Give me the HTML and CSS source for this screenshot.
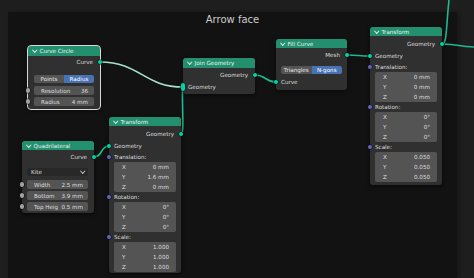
FILE: index.html
```html
<!DOCTYPE html>
<html lang="en">
<head>
  <meta charset="UTF-8" />
  <title>Arrow face - Geometry Nodes</title>
  <link rel="stylesheet" href="styles.css">
</head>
<body>

  <div class="frame">
    <div class="frame-title">Arrow face</div>

    <!-- links between sockets -->
    <svg class="wires" width="449" height="266" viewBox="0 0 449 266">
      <path class="wire hot" d="M92,50 C132,50 136,75 175,75" />
      <path class="wire" d="M247,63 C258,63 257,70 268,70" />
      <path class="wire" d="M339,43 C350,43 351,44 362,44" />
      <path class="wire" d="M434,32 C452,32 450,35 466,35" />
      <path class="wire" d="M434,32 C439,32 438,16 441,-12" />
      <path class="wire" d="M86,145 C95,145 92,134 101,134" />
      <path class="wire" d="M173,122 C177,122 173,84 175,75" />
    </svg>

    <!-- Curve Circle -->
    <div class="node node-circle selected">
      <div class="node-head"><span class="chev"></span>Curve Circle</div>
      <div class="row out mt1">Curve<span class="sock geo"></span></div>
      <div class="toggle mt8 mx6">
        <span>Points</span>
        <span class="on">Radius</span>
      </div>
      <div class="field mt3 mx6"><span class="sock flt"></span><span>Resolution</span><span>36</span></div>
      <div class="field mt2 mx6"><span class="sock flt"></span><span>Radius</span><span>4 mm</span></div>
    </div>

    <!-- Join Geometry -->
    <div class="node node-join">
      <div class="node-head"><span class="chev"></span>Join Geometry</div>
      <div class="row out mt2">Geometry<span class="sock geo"></span></div>
      <div class="row in mt2"><span class="sock geo multi"></span>Geometry</div>
    </div>

    <!-- Fill Curve -->
    <div class="node node-fill">
      <div class="node-head"><span class="chev"></span>Fill Curve</div>
      <div class="row out mt2">Mesh<span class="sock geo"></span></div>
      <div class="toggle mt6 mx5">
        <span>Triangles</span>
        <span class="on">N-gons</span>
      </div>
      <div class="row in mt3"><span class="sock geo"></span>Curve</div>
    </div>

    <!-- Transform (right) -->
    <div class="node node-tr-right">
      <div class="node-head"><span class="chev"></span>Transform</div>
      <div class="row out mt3">Geometry<span class="sock geo"></span></div>
      <div class="row in mt2"><span class="sock geo"></span>Geometry</div>
      <div class="vgroup mt1">
        <div class="row in"><span class="sock vec"></span>Translation:</div>
        <div class="vfields">
          <div class="vf"><span>X</span><span>0 mm</span></div>
          <div class="vf"><span>Y</span><span>0 mm</span></div>
          <div class="vf"><span>Z</span><span>0 mm</span></div>
        </div>
      </div>
      <div class="vgroup">
        <div class="row in"><span class="sock vec"></span>Rotation:</div>
        <div class="vfields">
          <div class="vf"><span>X</span><span>0°</span></div>
          <div class="vf"><span>Y</span><span>0°</span></div>
          <div class="vf"><span>Z</span><span>0°</span></div>
        </div>
      </div>
      <div class="vgroup">
        <div class="row in"><span class="sock vec"></span>Scale:</div>
        <div class="vfields">
          <div class="vf"><span>X</span><span>0.050</span></div>
          <div class="vf"><span>Y</span><span>0.050</span></div>
          <div class="vf"><span>Z</span><span>0.050</span></div>
        </div>
      </div>
    </div>

    <!-- Transform (middle) -->
    <div class="node node-tr-mid">
      <div class="node-head"><span class="chev"></span>Transform</div>
      <div class="row out mt3">Geometry<span class="sock geo"></span></div>
      <div class="row in mt2"><span class="sock geo"></span>Geometry</div>
      <div class="vgroup mt1">
        <div class="row in"><span class="sock vec"></span>Translation:</div>
        <div class="vfields">
          <div class="vf"><span>X</span><span>0 mm</span></div>
          <div class="vf"><span>Y</span><span>1.6 mm</span></div>
          <div class="vf"><span>Z</span><span>0 mm</span></div>
        </div>
      </div>
      <div class="vgroup">
        <div class="row in"><span class="sock vec"></span>Rotation:</div>
        <div class="vfields">
          <div class="vf"><span>X</span><span>0°</span></div>
          <div class="vf"><span>Y</span><span>0°</span></div>
          <div class="vf"><span>Z</span><span>0°</span></div>
        </div>
      </div>
      <div class="vgroup">
        <div class="row in"><span class="sock vec"></span>Scale:</div>
        <div class="vfields">
          <div class="vf"><span>X</span><span>1.000</span></div>
          <div class="vf"><span>Y</span><span>1.000</span></div>
          <div class="vf"><span>Z</span><span>1.000</span></div>
        </div>
      </div>
    </div>

    <!-- Quadrilateral -->
    <div class="node node-quad">
      <div class="node-head"><span class="chev"></span>Quadrilateral</div>
      <div class="row out mt2">Curve<span class="sock geo"></span></div>
      <div class="dropdown mt6 mx5l6"><span>Kite</span><span class="chev dark"></span></div>
      <div class="field mt4 mx5l6"><span class="sock flt"></span><span>Width</span><span>2.5 mm</span></div>
      <div class="field mt2 mx5l6"><span class="sock flt"></span><span>Bottom</span><span>3.9 mm</span></div>
      <div class="field mt2 mx5l6"><span class="sock flt"></span><span>Top Heig</span><span>0.5 mm</span></div>
    </div>
  </div>

</body>
</html>
```

FILE: styles.css
```css
body {
  margin: 0;
  width: 474px;
  height: 278px;
  overflow: hidden;
  background: #1e1e1e;
  font-family: 'DejaVu Sans', 'Noto Sans', sans-serif;
  font-size: 5.6px;
  color: #dedede;
}

/* frame around the whole setup */
.frame {
  position: relative;
  margin: 12px 0 0 8px;
  width: 449px;
  height: 266px;
  background: #121212;
  box-shadow: 2px 0 3px rgba(0,0,0,0.25);
}
.frame-title {
  text-align: center;
  font-size: 10px;
  color: #cccccc;
  padding-top: 2px;
}

.wires {
  position: absolute;
  left: 0;
  top: 0;
  overflow: visible;
}
.wire {
  fill: none;
  stroke: #1fb98e;
  stroke-width: 1.6;
}
.wire.hot {
  stroke: #a8e2cc;
}

/* nodes */
.node {
  position: absolute;
  width: 72px;
  background: #303030;
  border-radius: 3px;
  display: flex;
  flex-direction: column;
  box-shadow: 0 1px 4px rgba(0,0,0,0.6);
}
.node.selected {
  outline: 1px solid #d8d8d8;
}
.node-circle   { left: 20px;  top: 34px;  height: 63px; }
.node-join     { left: 175px; top: 46px;  height: 36px; }
.node-fill     { left: 268px; top: 27px;  width: 71px; height: 51px; }
.node-tr-right { left: 362px; top: 15px;  height: 158px; }
.node-tr-mid   { left: 101px; top: 105px; height: 156px; }
.node-quad     { left: 14px;  top: 129px; height: 72px; }

.node-head {
  height: 9px;
  background: #22906f;
  border-radius: 3px 3px 0 0;
  display: flex;
  align-items: center;
  padding-left: 4px;
  color: #f0f0f0;
}
.node-circle .node-head,
.node-join .node-head { height: 10px; }

.chev {
  display: inline-block;
  width: 2.5px;
  height: 2.5px;
  border-right: 0.8px solid #e8e8e8;
  border-bottom: 0.8px solid #e8e8e8;
  transform: rotate(45deg);
  margin: -2px 3px 0 1px;
}
.chev.dark {
  border-color: #bdbdbd;
  margin: -2px 1px 0 0;
}

.row {
  position: relative;
  height: 10px;
  display: flex;
  align-items: center;
  padding: 0 5px;
  white-space: nowrap;
}
.row.out {
  justify-content: flex-end;
  padding-right: 7px;
}

/* sockets */
.sock {
  position: absolute;
  top: 50%;
  width: 4.5px;
  height: 4.5px;
  margin-top: -2.25px;
  border-radius: 50%;
  box-shadow: 0 0 0 0.5px #111;
}
.row.in .sock { left: -2.25px; }
.row.out .sock { right: -2.25px; }
.sock.geo { background: #00d6a3; }
.sock.vec { background: #6363c7; }
.sock.flt { background: #a1a1a1; }
.sock.multi {
  height: 8px;
  margin-top: -4px;
  border-radius: 2px;
}
.field .sock { left: -8.25px; }
.node-quad .field .sock { left: -7.25px; }

/* widgets */
.toggle {
  height: 8px;
  display: flex;
  border-radius: 2px;
  overflow: hidden;
}
.toggle span {
  flex: 1;
  background: #545454;
  display: flex;
  align-items: center;
  justify-content: center;
  color: #e6e6e6;
}
.toggle span.on {
  background: #4772b3;
  color: #ffffff;
}

.field {
  position: relative;
  height: 9px;
  background: #545454;
  border-radius: 2px;
  display: flex;
  align-items: center;
  justify-content: space-between;
  padding: 0 6px 0 7px;
  white-space: nowrap;
}
.node-quad .field {
  padding: 0 5px 0 7px;
}

.dropdown {
  height: 8px;
  background: #282828;
  border-radius: 2px;
  display: flex;
  align-items: center;
  justify-content: space-between;
  padding: 0 3px 0 4px;
}

.vgroup {
  display: flex;
  flex-direction: column;
}
.vfields {
  height: 30px;
  margin: 0 5px;
  display: flex;
  flex-direction: column;
  gap: 0.7px;
  border-radius: 2px;
  overflow: hidden;
  background: #3c3c3c;
}
.vf {
  flex: 1;
  background: #545454;
  display: flex;
  align-items: center;
  justify-content: space-between;
  padding: 0 7px 0 8px;
}

/* spacing helpers */
.mt1 { margin-top: 1px; }
.mt2 { margin-top: 2px; }
.mt3 { margin-top: 3px; }
.mt4 { margin-top: 4px; }
.mt6 { margin-top: 6px; }
.mt8 { margin-top: 8px; }
.mx5 { margin-left: 5px; margin-right: 5px; }
.mx6 { margin-left: 6px; margin-right: 6px; }
.mx5l6 { margin-left: 5px; margin-right: 6px; }
```
